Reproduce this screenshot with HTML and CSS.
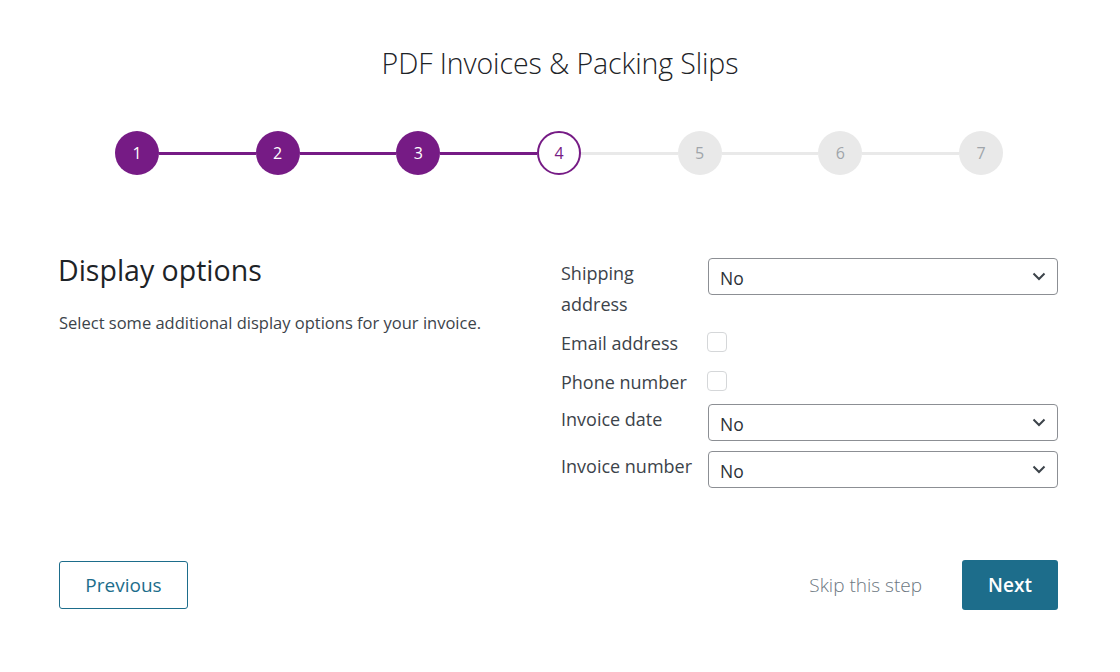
FILE: index.html
```html
<!DOCTYPE html>
<html lang="en">
<head>
<meta charset="utf-8">
<title>PDF Invoices &amp; Packing Slips</title>
<link rel="stylesheet" href="styles.css">
</head>
<body>
<div class="wrap">
  <h1 class="title">PDF Invoices &amp; Packing Slips</h1>
  <div class="steps">
    <div class="step done">1</div>
    <div class="bar done"></div>
    <div class="step done">2</div>
    <div class="bar done"></div>
    <div class="step done">3</div>
    <div class="bar done"></div>
    <div class="step current">4</div>
    <div class="bar"></div>
    <div class="step">5</div>
    <div class="bar"></div>
    <div class="step">6</div>
    <div class="bar"></div>
    <div class="step">7</div>
  </div>
  <div class="content">
    <div class="intro">
      <h2 class="heading">Display options</h2>
      <p class="desc">Select some additional display options for your invoice.</p>
    </div>
    <div class="form">
      <div class="row">
        <label class="label">Shipping address</label>
        <div class="select"><span>No</span><svg class="chev" width="14" height="9" viewBox="0 0 14 9"><path d="M1.5 1.5 L7 7 L12.5 1.5" fill="none" stroke="#3c434a" stroke-width="2"/></svg></div>
      </div>
      <div class="row">
        <label class="label">Email address</label>
        <input type="checkbox" class="check">
      </div>
      <div class="row">
        <label class="label">Phone number</label>
        <input type="checkbox" class="check">
      </div>
      <div class="row date">
        <label class="label">Invoice date</label>
        <div class="select"><span>No</span><svg class="chev" width="14" height="9" viewBox="0 0 14 9"><path d="M1.5 1.5 L7 7 L12.5 1.5" fill="none" stroke="#3c434a" stroke-width="2"/></svg></div>
      </div>
      <div class="row last">
        <label class="label">Invoice number</label>
        <div class="select"><span>No</span><svg class="chev" width="14" height="9" viewBox="0 0 14 9"><path d="M1.5 1.5 L7 7 L12.5 1.5" fill="none" stroke="#3c434a" stroke-width="2"/></svg></div>
      </div>
    </div>
  </div>
  <div class="footer">
    <button class="btn prev">Previous</button>
    <div class="right">
      <a class="skip">Skip this step</a>
      <button class="btn next">Next</button>
    </div>
  </div>
</div>
</body>
</html>
```
FILE: styles.css
```css
* { box-sizing: border-box; }
html, body { margin: 0; padding: 0; background: #fff; }
body {
  font-family: "Open Sans", "Noto Sans", sans-serif;
  color: #3c434a;
  width: 1120px;
  height: 672px;
  overflow: hidden;
}
.wrap {
  width: 1000px;
  margin: 0 auto;
}
.title {
  margin: 44px 0 0;
  font-weight: 300;
  font-size: 28.5px;
  line-height: 38px;
  text-align: center;
  color: #1d2327;
  letter-spacing: -0.1px;
}
.steps {
  display: flex;
  align-items: center;
  margin: 49px 57px 0 55px;
}
.step {
  width: 44px;
  height: 44px;
  flex: 0 0 44px;
  border-radius: 50%;
  background: #e9e9e9;
  color: #a0a5aa;
  display: flex;
  align-items: center;
  justify-content: center;
  font-size: 16px;
}
.step.done {
  background: #761b85;
  color: #fff;
}
.step.current {
  background: #fff;
  border: 2px solid #761b85;
  color: #761b85;
}
.bar {
  flex: 1;
  height: 3px;
  background: #e9e9e9;
}
.bar.done { background: #761b85; }

.content {
  display: flex;
  margin-top: 79px;
}
.intro {
  width: 501px;
}
.heading {
  margin: 0 0 0 -2px;
  font-weight: 400;
  font-size: 28.5px;
  line-height: 32px;
  color: #1d2327;
}
.desc {
  margin: 25px 0 0 -1px;
  font-size: 16.5px;
  line-height: 24px;
  color: #3c434a;
}
.form {
  width: 499px;
  padding-top: 4px;
  display: flex;
  flex-direction: column;
  gap: 8px;
}
.row {
  display: flex;
  align-items: flex-start;
}
.row.date { margin-top: -2px; }
.row.last { margin-top: 2px; }
.label {
  width: 147px;
  flex: 0 0 147px;
  font-size: 18px;
  line-height: 31px;
  color: #3c434a;
  padding-right: 10px;
}
.select {
  width: 350px;
  height: 37px;
  border: 1px solid #8c8f94;
  border-radius: 4px;
  display: flex;
  align-items: center;
  justify-content: space-between;
  padding: 0 11px 0 11px;
  font-size: 17.5px;
  color: #2c3338;
  background: #fff;
}
.select span { padding-top: 2px; }
.chev { display: block; }
.check {
  appearance: none;
  -webkit-appearance: none;
  margin: 4px 0 0 -1px;
  width: 20px;
  height: 20px;
  border: 1px solid #d5d7d9;
  border-radius: 4px;
  background: #fff;
}
.footer {
  display: flex;
  justify-content: space-between;
  align-items: center;
  margin-top: 72px;
}
.right {
  display: flex;
  align-items: center;
  gap: 40px;
}
.btn {
  font-family: "Open Sans", "Noto Sans", sans-serif;
  font-size: 19px;
  border-radius: 3px;
  cursor: pointer;
}
.prev {
  width: 129px;
  height: 48px;
  border: 1px solid #1d6d8b;
  background: #fff;
  color: #1d6d8b;
  margin-left: -1px;
}
.next {
  width: 96px;
  height: 50px;
  border: none;
  background: #1d6d8b;
  color: #fff;
  font-weight: 600;
  margin-right: 2px;
}
.skip {
  font-size: 19px;
  font-weight: 300;
  color: #6c7781;
  text-decoration: none;
}
```
